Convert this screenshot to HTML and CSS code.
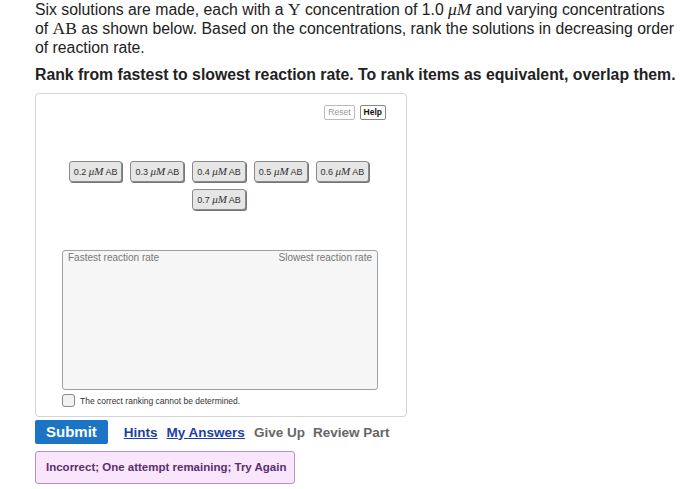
FILE: index.html
```html
<!DOCTYPE html>
<html>
<head>
<meta charset="utf-8">
<link rel="stylesheet" href="styles.css">
</head>
<body>
<div class="page">
  <p class="intro">Six solutions are made, each with a <span class="math">Y</span> concentration of 1.0 <span class="mi">μM</span> and varying concentrations<br>of <span class="math">AB</span> as shown below. Based on the concentrations, rank the solutions in decreasing order<br>of reaction rate.</p>
  <p class="task">Rank from fastest to slowest reaction rate. To rank items as equivalent, overlap them.</p>
  <div class="panel">
    <div class="tools">
      <span class="tbtn reset">Reset</span>
      <span class="tbtn help">Help</span>
    </div>
    <div class="chips">
      <span class="chip">0.2 <i>μM</i> AB</span>
      <span class="chip">0.3 <i>μM</i> AB</span>
      <span class="chip">0.4 <i>μM</i> AB</span>
      <span class="chip">0.5 <i>μM</i> AB</span>
      <span class="chip">0.6 <i>μM</i> AB</span>
    </div>
    <div class="chips second">
      <span class="chip">0.7 <i>μM</i> AB</span>
    </div>
    <div class="drop">
      <span>Fastest reaction rate</span>
      <span>Slowest reaction rate</span>
    </div>
    <label class="check"><span class="box"></span>The correct ranking cannot be determined.</label>
  </div>
  <div class="actions">
    <span class="submit">Submit</span>
    <a class="link">Hints</a>
    <a class="link">My Answers</a>
    <span class="muted">Give Up</span>
    <span class="muted">Review Part</span>
  </div>
  <div class="feedback">Incorrect; One attempt remaining; Try Again</div>
</div>
</body>
</html>
```

FILE: styles.css
```css
html, body {
  margin: 0;
  padding: 0;
  background: #fff;
}
body {
  font-family: "Liberation Sans", Arial, sans-serif;
  color: #222;
}
.page {
  padding: 0 10px 0 35px;
}
.intro {
  margin: 0;
  font-size: 15.8px;
  line-height: 19px;
  width: 660px;
  white-space: nowrap;
}
.math {
  font-family: "Liberation Serif", serif;
  font-size: 17.5px;
  line-height: 1;
}
.mi {
  font-family: "Liberation Serif", serif;
  font-style: italic;
  font-size: 17.5px;
  line-height: 1;
}
.task {
  margin: 8px 0 0;
  font-size: 15.8px;
  line-height: 19px;
  font-weight: bold;
}
.panel {
  margin-top: 9px;
  width: 372px;
  height: 324px;
  border: 1px solid #d4d4d4;
  border-radius: 4px;
  box-sizing: border-box;
}
.tools {
  display: flex;
  justify-content: flex-end;
  gap: 5px;
  padding: 11px 20px 0 0;
}
.tbtn {
  font-size: 8.5px;
  line-height: 11px;
  padding: 1px 3px;
  border: 1px solid #bbb;
  border-radius: 2px;
  background: #fff;
}
.reset { color: #999; }
.help { color: #111; font-weight: bold; border-color: #888; }
.chips {
  display: flex;
  justify-content: center;
  gap: 8px;
  margin-top: 41px;
  padding-right: 4px;
}
.chips.second {
  margin-top: 7px;
}
.chip {
  font-size: 9px;
  line-height: 19px;
  height: 19px;
  padding: 0 4px;
  background: #e6e6e6;
  border: 1px solid #8a8a8a;
  border-radius: 3px;
  box-shadow: 1px 1px 0 #777;
  color: #333;
  white-space: nowrap;
}
.chip i {
  font-family: "Liberation Serif", serif;
  font-size: 11px;
}
.drop {
  margin: 40px 0 0 26px;
  width: 316px;
  height: 140px;
  box-sizing: border-box;
  background: #f6f6f6;
  border: 1px solid #a0a0a8;
  border-radius: 3px;
  display: flex;
  justify-content: space-between;
  align-items: flex-start;
  padding: 1px 5px 0 5px;
  font-size: 10px;
  color: #777;
}
.check {
  display: flex;
  align-items: center;
  margin: 4px 0 0 26px;
  font-size: 8.5px;
  color: #333;
}
.box {
  width: 11px;
  height: 11px;
  border: 1px solid #888;
  border-radius: 3px;
  background: #f2f2f2;
  margin-right: 5px;
}
.actions {
  display: flex;
  align-items: center;
  margin-top: 3px;
  font-size: 13.5px;
  font-weight: bold;
}
.submit {
  background: #1b74c5;
  color: #fff;
  font-size: 15px;
  padding: 0 11px;
  height: 24px;
  line-height: 24px;
  border-radius: 2px;
  margin-right: 16px;
}
.link {
  color: #1e3fa0;
  text-decoration: underline;
  margin-right: 9px;
}
.muted {
  color: #666;
  margin-right: 8px;
}
.feedback {
  margin-top: 7px;
  width: 260px;
  height: 33px;
  box-sizing: border-box;
  background: #f9e6fc;
  border: 1px solid #b591c6;
  border-radius: 3px;
  color: #5b2f6e;
  font-weight: bold;
  font-size: 11.5px;
  line-height: 31px;
  padding-left: 10px;
}
```
